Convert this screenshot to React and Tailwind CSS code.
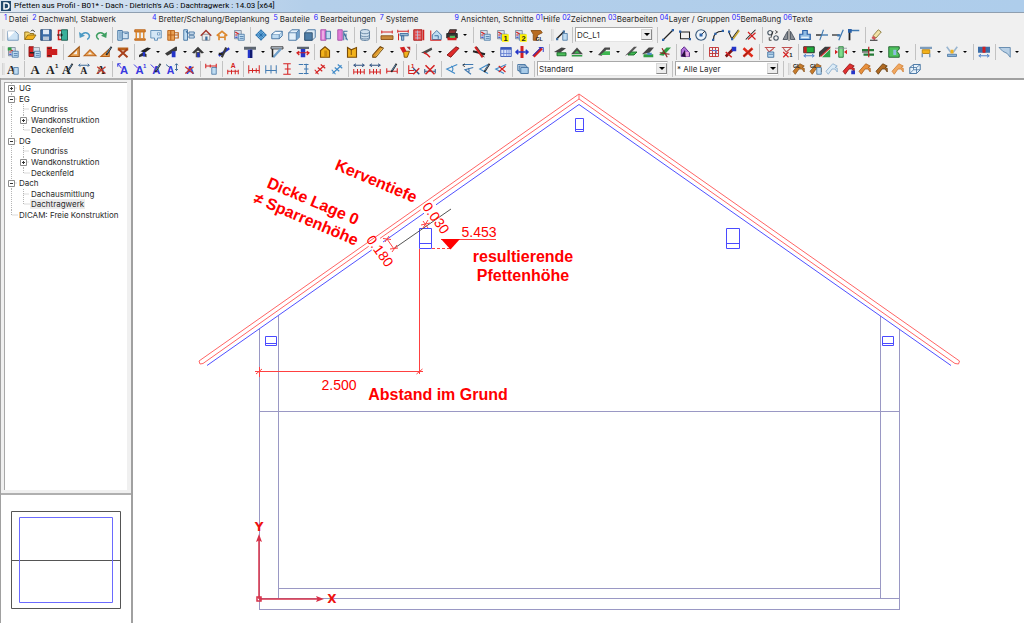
import React, { useState } from 'react';
import clsx from 'clsx';

const BL = '#3f6f9f', LB = '#bfdcf2', OR = '#dd8a30', BR = '#8a5218', RD = '#d42020', GN = '#2f9e44', NV = '#2435c8', BK = '#222222', GY = '#8a8f96', YL = '#f2b21c';
const SERIF = 'Liberation Serif, serif';

// path helpers: f = filled, s = stroked, b = both, t = letter
const f = (d, fill) => ({ d, fill, stroke: 'none' });
const s = (d, stroke, w = 1.5) => ({ d, fill: 'none', stroke, w });
const b = (d, fill, stroke, w = 1.2) => ({ d, fill, stroke, w });
const t = (ch, x, y, size, color, font) => ({ ch, x, y, size, color, font });

// --- SHARED PARTS ---
const doc = b('M9 6h6v9H9z', LB, BL, 1);
const cross = s('M3 5l11 9M14 5L3 14', '#c23a2e', 1.8);
const pen = [s('M14 1L7 12', BK, 2.4), s('M13 2L8 10', '#6fa8dc', 1)];
const houseSheet = [b('M2 2h9v11H2z', '#d5dfea', '#6f7f90', 1), s('M3 4l5 3M3 8h3', RD, 1.6), s('M3 11h3', NV, 1.4), b('M7 7h8v8H7z', LB, BL, 1), s('M9 10h5M9 12.5h5', BL, 1)];
const plank = (c, e) => [b('M0 11L9 1l6 3-3 2 3 1v5l-3-4-4 0-5 7z', c, e, 1)];

const ICONS = {
  file: [b('M1 3h10l4 4v8H1z', '#cfe4f5', '#6f94b8'), f('M1 3h10l-9 9z', '#ffffff')],
  open: [b('M1 14V4h5l2 2h5v3', '#f4d469', '#8c6a14'), b('M1 14l4-6h11l-4 6z', YL, '#8c6a14'), s('M9 3c2-2 4-2 5 1', BK, 1.3)],
  save: [b('M1 1h14v14H1z', '#3c6ea8', '#24466e'), f('M4 1h8v6H4z', '#dfeaf5'), f('M4 10h8v5H4z', '#b9c8d8')],
  exit: [f('M1 1h5v2H3v10h3v2H1z', RD), b('M6 1h8v14H6z', '#39b09a', '#1d5a4e'), s('M0 8h7M5 6l2 2-2 2', BK, 1.4)],
  undo: [s('M3 9c2-5 9-6 11 0 0 2-1 4-3 5', '#4d9ac4', 2), f('M0 4l1 8 7-3z', '#4d9ac4')],
  redo: [s('M13 9C11 4 4 3 2 9c0 2 1 4 3 5', '#3f9f62', 2), f('M16 4l-1 8-7-3z', '#3f9f62')],
  wall: [b('M1 2h6v13H1z', LB, BL), b('M7 4h8v9H7z', '#cfe2f2', BL), s('M4 3v10M10 6h4', BL, 1)],
  frame: [b('M1 1h14v3H1zM1 13h14v2H1z', OR, '#b9621a'), s('M3 4v9M8 4v9M13 4v9', OR, 2)],
  wallCut: [b('M1 2h14v10h-5v3H6v-3H1z', '#d4e7f6', '#5d8db8'), b('M10 5h3v3h-3z', '#fff', '#5d8db8', 1)],
  timber: [b('M1 2h9v13H1z', '#e9a257', '#b9621a'), s('M1 8h14M5 2v13M10 5h5v7h-5', '#b9621a', 1.5)],
  panel: [b('M1 1h5v14H1z', LB, BL), b('M8 4h7v3H8zM8 9h7v3H8z', '#e4f0fa', BL), s('M4 3l3 3', BL)],
  house: [b('M3 7h10v8H3z', '#ececec', GY), s('M1 9l7-7 7 7', '#a33a30', 2), f('M7 10h3v5H7z', BL)],
  roof: [s('M1 9l7-6 7 6M4 15V8M12 15V8M4 11h8', OR, 2.2)],
  houseDoc: houseSheet,
  globe: [b('M8 1l7 7-7 7-7-7z', '#6fb1e0', '#1f66a5'), s('M8 1v14M1 8h14M4 4l8 8M12 4l-8 8', '#1f66a5', 1)],
  cubeTop: [b('M1 13V7l5-4h9v6l-4 4z', LB, BL), s('M1 7h10l4-4M11 7v6', BL, 1), f('M2 7l4-3h8l-3 3z', '#f4faff')],
  cubeSide: [b('M1 5l4-4h10v10l-4 4H1z', '#e3f0fa', BL), f('M11 5l4-4v10l-4 4z', '#6fa0cb'), s('M1 5h10v10M11 5l4-4', BL, 1)],
  cubeFront: [b('M1 5l4-4h10v10l-4 4H1z', '#dbeaf6', BL), b('M1 5h10v10H1z', '#4f7ea8', '#31506c')],
  pink: [b('M1 1h7v14H1z', '#e27ad6', '#a650a8'), b('M8 3h6v10H8z', LB, BL), s('M4 2v12', '#fff', 1)],
  pink2: [b('M1 1h6v14H1z', '#e27ad6', '#a650a8'), s('M9 15V3h5M9 5l5 10M12 6v8', BL, 1.4)],
  disk: [b('M2 3c0-3 12-3 12 0v10c0 3-12 3-12 0z', '#cfe0ee', '#56789a'), s('M2 4c0 3 12 3 12 0M2 8c0 3 12 3 12 0M2 11c0 3 12 3 12 0', '#56789a', 1)],
  dimBeam: [s('M1 4h14M1 2v4M15 2v4', RD, 1.3), b('M0 9h16v5H0z', '#c98a3c', BR)],
  dimPost: [s('M1 3h14M1 1v4M15 1v4M2 6v9', RD, 1.3), b('M4 6h11v3H4zM6 9h3v6H6z', '#9db8d2', BL)],
  sheetRed: [b('M1 1h11v14H1z', '#e85050', '#a31616'), s('M3 4h7M3 8h7M3 12h7M6 2v12', '#b9c8e4', 1), s('M14 1v14', RD, 2)],
  dimHouse: [b('M3 8l6-6 6 6v6H3z', LB, BL), s('M1 2v13h14', RD, 1.4), s('M6 9h5v4', BL, 1.3)],
  printer: [b('M5 1h9l-2 5H3z', '#8c3030', BK), b('M1 6h14v6H1z', '#333', BK), f('M2 11h12v4H2z', RD), f('M5 9h7v3H5z', '#58b85c')],
  doc1: [...houseSheet, f('M8 7h9v10H8z', '#fff200'), t('1', 10, 16, 10, BK)],
  doc2: [...houseSheet, f('M8 7h9v10H8z', '#fff200'), t('2', 10, 16, 10, BK)],
  glBox: [b('M0 2h13l2 3-6 3-2 7H3V7z', '#b86c20', BR), t('GL', 6, 16, 7, BK)],
  lineDoc: [s('M1 13L11 3', BK, 1.8), f('M9 2h3v3H9zM0 12h3v3H0z', BL), doc],
  line: [s('M2 14L14 2', BK, 1.6), f('M0 13h3v3H0zM13 0h3v3h-3z', '#2c62a8')],
  rect: [s('M2 4h12v9H2z', BK, 1.4), f('M0 2h3v3H0zM13 12h3v3h-3z', '#2c62a8')],
  circle: [b('M8 1a7 7 0 1 0 .1 0z', '#eef5fb', '#3f5f80', 1.5), s('M8 8l5-5', BK, 1.2), f('M6 6h4v4H6z', '#2c62a8')],
  arc: [s('M2 14C2 7 6 3 14 3', BK, 1.5), f('M0 13h3v3H0zM13 1h3v3h-3zM3 5h3v3H3z', '#2c62a8')],
  polyPen: [s('M1 4l4 9L14 1', BK, 1.4), s('M15 2L7 13', '#c6a52e', 2), f('M0 2h3v3H0zM4 12h3v3H4z', '#2c62a8')],
  lineDel: [s('M1 14L14 1', BK, 1.4), s('M4 4l10 10M14 5L4 14', RD, 1.6)],
  gears: [s('M4 2a3 3 0 1 0 .1 0zM12 9a3 3 0 1 0 .1 0z', '#4d5b68', 1.6), s('M11 2l3 2-3 2M3 11v4h3M8 3L5 12', BK, 1.1)],
  mirror: [b('M6 3v11H0zM10 3v11h6z', '#8a8f96', '#4d5560'), s('M8 0v16', BK, 1)],
  stamp: [b('M5 2h6v5h4v7H1V7h4z', '#8fbbe2', '#2c62a8', 1.6), s('M3 11h10', '#fff', 1.4)],
  trim: [s('M0 8h8', BK, 1.8), s('M8 8h8', '#3f78b0', 1.8), s('M10 1L5 15', '#3f78b0', 1.4)],
  extend: [s('M0 8h10', BK, 1.6), s('M15 1L9 15', '#3f78b0', 1.6), f('M7 7h4v3H7z', '#3f78b0')],
  corner: [s('M2 15V3', BK, 2.4), s('M2 2h13', '#3f78b0', 2), f('M0 0h5v5H0z', '#2c62a8')],
  eraser: [b('M4 9l7-8 4 3-7 8z', '#f3e3a8', '#8a7a3c'), f('M4 9l4 3-2 3-4-3z', '#d05858'), s('M0 15h10', BK, 1.3)],

  houseGreen: [...houseSheet, f('M1 2h5v4H1z', GN)],
  docRed: [b('M0 1h6v13H0z', RD, '#8c1010'), b('M6 2h8v6H6z', '#d5dfea', GY, 1), b('M7 7h8v8H7z', LB, BL, 1), s('M9 10h5M9 12.5h5', BL, 1), s('M1 9h6', BK, 2)],
  sheetR2: [f('M1 1h7v14H1zM7 4h8v8H7z', '#cc1f1f'), s('M2 3h4M2 13h4', BK, 1.2)],
  ruler: [b('M1 14L15 1v13z', '#e8a050', '#9b5416', 1.4), f('M7 11l5-5v5z', '#f0f0f0')],
  rulerLow: [b('M0 13l8-8 8 8z', '#e8a050', '#b9621a', 1.4), f('M5 11l3-3 3 3z', '#f0f0f0')],
  rulerPen: [b('M0 14L11 4v10z', '#e8a050', '#b9621a', 1.4), ...pen],
  roofDel: [f('M1 2h14v4H1z', '#b9621a'), s('M2 4l12 11M14 4L2 15', '#a8401a', 2.6)],
  bBlack: [f('M2 7l9-5 5 1-8 6z', BK), f('M0 12l6-4 4 3v4l-4-2-6 2z', '#303030'), f('M5 8h3v6H5z', NV)],
  bAngle: [f('M0 10L14 1h2v5L3 13z', '#3c3c3c'), f('M9 7h5v8H9z', NV)],
  hBlack: [f('M0 9l8-8 8 8-3 1-5-4-5 4z', '#3a3a3a'), f('M5 8h6v7H5z', '#555'), f('M7 9h3v6H7z', NV)],
  bCross: [s('M1 13L15 3', NV, 3), s('M5 15l6-13', '#3c3c3c', 3), f('M1 9h5v3H1z', BK)],
  post: [f('M0 1h16v4H0z', '#5d6670'), f('M5 5h6v11H5z', NV), f('M8 5h3v11H8z', '#101a70')],
  corner2: [b('M0 1h16v3H0z', '#c0ccd8', BK, 1), s('M3 15L13 4', '#6fa0cb', 3), s('M2 4v11', BK, 2)],
  postRed: [f('M0 1h16v3H0z', '#5d6670'), f('M5 4h6v11H5z', NV), s('M0 9h16M3 7L0 9l3 3M13 7l3 2-3 3', RD, 1.6)],
  tag: [b('M2 15V6l6-5 6 5v9z', YL, '#7a4b08', 1.5), f('M7 6h4v9H7z', '#c98a10')],
  tag2: [b('M2 2l5 3 7-3v13H2z', YL, '#7a4b08', 1.5), s('M7 5v7', '#7a4b08', 1.2)],
  board: [b('M1 12L11 1l4 2L5 15H1z', '#e0992c', '#6e4208', 1.4), s('M5 14L14 3', '#f8dc70', 1)],
  boardRed: [b('M6 7h8l-3 8H7z', YL, '#7a4b08'), f('M1 2l6-1 3 6-5 2z', RD), f('M10 1h5v5z', '#a33')],
  cutRed: [f('M0 9L14 2l1 3-9 5z', '#4a4a4a'), s('M4 9l4 2 4 4', RD, 2)],
  barRed: [b('M0 12L12 1l4 2L5 15z', '#e02a2a', '#7c1010')],
  crossRed: [s('M0 7l16 4', BK, 3), s('M3 1l10 14', RD, 3), s('M5 1l10 14', BK, 1)],
  table: [b('M1 2h14v12H1z', '#d9e4fb', '#3a58b8'), f('M1 2h14v3H1z', '#3a58b8'), s('M5 5v9M9 5v9M12 5v9M1 10h14', '#5b78d0', 1)],
  plusRB: [f('M6 0h4v16H6z', RD), s('M0 8h16M3 5L0 8l3 3M13 5l3 3-3 3', NV, 2)],
  barRB: [s('M2 14L13 3', RD, 4), s('M1 13L12 2', NV, 1.4), s('M9 2h6v6', NV, 1.2)],
  gBeam: [f('M0 8l10-6 6 1-8 6z', '#444'), b('M4 9h12v4H4z', '#4cbf5a', '#176a28')],
  gRoof: [f('M0 11l8-9 8 9z', '#4a4a4a'), f('M1 12h14v2H1z', GN), f('M4 10l4-4 4 4z', '#3fb651')],
  gBar: [f('M0 12L9 2h7v3h-5L5 13z', '#4a4a4a'), f('M3 12l6-5h7v5z', '#3fb651')],
  gEdge: [f('M0 13L12 1h4l-9 9z', '#555'), b('M4 12l5-4h7l-4 4z', '#3fb651', '#176a28')],
  gBlue: [f('M0 11L9 2h7l-6 7z', '#444'), f('M2 11h13v4H2z', GN), f('M7 9h6v3H7z', '#4d8ac4')],
  gCross: [f('M0 12L10 2h6L6 13z', GN), s('M4 3l7 12M1 9l13 2', '#8c2020', 1.6)],
  purple: [b('M3 14V5l4-4 7 8v5z', '#b070d8', '#5a2488'), f('M8 8h5v6H8z', '#e9a8e4'), f('M3 13l5-8 1 10z', '#2a1040')],
  gridRed: [s('M2 2h12v12H2zM2 6h12M2 10h12M6 2v12M10 2v12', '#c03030', 1.2), s('M5 6h6v4', '#5b78d0', 1.4)],
  delBlue: [s('M1 14L12 3', '#7c1414', 3.5), f('M9 1h6v6H9z', NV), s('M1 8l8 7', RD, 2)],
  delRed: [s('M2 3l12 11M14 3L2 14', '#e02a1a', 3.4), s('M2 14L13 4', '#602010', 1)],
  pageV: [s('M1 2h14M3 3l4 5 6-5', '#c05050', 1.5), b('M5 8h8v7H5z', LB, BL), s('M6 11h6', BL, 1)],
  pageX: [s('M1 2h14M3 3l4 5 6-5', '#c05050', 1.5), s('M3 8l7 7M10 8l-7 7', RD, 1.5), t('1', 11, 15, 8, BK)],
  gArrow: [b('M1 1h14v8H1z', '#1fae3c', BK), f('M1 1h4v8H1z', '#c02020'), s('M2 13h12M4 11l-3 2 3 2M12 11l3 2-3 2', '#3f78c8', 1.2)],
  gDiag: [f('M0 15V8l8-7h8z', '#3c3c3c'), f('M4 15L15 4v11z', '#2fa048'), s('M2 14L15 2', '#c02020', 1.4)],
  gIn: [b('M5 1h6v14H5z', '#7fdc8c', '#257a36'), f('M0 5l4 3-4 3zM16 5l-4 3 4 3z', RD), s('M0 3h16', GY, 1)],
  gRows: [f('M0 4h16v3H0zM2 10h14v3H2z', '#257a36'), s('M9 1v14', '#c02020', 1.6), s('M0 8h9', BK, 1.2)],
  gPiece: [b('M1 1h14v3l-3 3 3 4v4H1z', '#4fc25e', '#1a5c28'), f('M7 5h4v7H7z', '#8fbbe2')],
  clampY: [f('M0 1h16v3H0z', '#7d9cbc'), b('M3 5h10v5H3z', YL, '#b88010'), s('M3 10v5M13 10v5', '#7d9cbc', 2)],
  downY: [s('M1 1l5 7h4l5-7', '#9ab6d0', 2.2), f('M6 5h4v5H6z', YL), b('M2 11h12v3H2z', '#8fb4d6', BL, 1)],
  blueRed: [f('M0 1h16v8H0z', '#3c6ea8'), f('M6 1h4v8H6z', RD), s('M2 13h12M4 11l-3 2 3 2M12 11l3 2-3 2', '#3f78c8', 1.2)],
  blueEdge: [b('M0 2h15v13l-4-5-6-3z', '#b8d0e6', '#5f87ad')],

  Adoc: [t('A', 0, 14, 16, BK, SERIF), doc],
  A: [t('A', 2, 14, 17, BK, SERIF)],
  A1: [t('A', 0, 14, 16, BK, SERIF), t('1', 12, 7, 8, BK)],
  Apen: [t('A', 0, 14, 16, BK, SERIF), ...pen],
  Adim: [t('A', 3, 15, 13, BK, SERIF), s('M1 3h14M3 1L1 3l2 2M13 1l2 2-2 2', '#2c5f90', 1.2)],
  Ax: [t('A', 2, 14, 16, BK, SERIF), cross],
  aB: [t('A', 4, 15, 15, '#3838e0'), s('M1 1l5 6M1 5V1h4', '#3838e0', 1.3)],
  aB1: [t('A', 2, 15, 15, '#3838e0'), s('M0 2l5 5', '#3838e0', 1.3), t('1', 12, 7, 8, '#3838e0')],
  aBpen: [t('A', 3, 15, 15, '#3838e0'), s('M1 2l5 5', '#3838e0', 1.3), ...pen],
  aBdim: [t('A', 1, 15, 14, '#3838e0'), s('M0 2l5 4M14 1v9M12 3l2-2 2 2M12 8l2 2 2-2', '#2c5f90', 1.2)],
  aBx: [t('A', 4, 15, 15, '#3838e0'), cross],
  dimDoc: [s('M1 1v6M15 1v6M1 4h14M7 2v4', RD, 1.4), doc],
  dimA: [t('A', 5, 7, 9, RD), s('M1 11h14M1 9v6M15 9v6M6 9v6M11 9v6', RD, 1.3)],
  dimR: [s('M1 3v11M15 3v11M1 10h14M6 7v6M11 7v6', RD, 1.3)],
  dimB: [s('M1 3v11M15 3v11M1 10h14M8 3v11', '#3f78b0', 1.3)],
  dimVR: [s('M3 1h10M3 15h10M9 1v14M5 8h8', RD, 1.4)],
  dimVB: [s('M1 2h6M1 14h6M11 1v14M8 2h6M8 8h6M8 14h6', '#3f78b0', 1.4)],
  dimDR: [s('M2 14L14 3M1 9l5 6M9 2l6 5M5 6l6 5', RD, 1.5)],
  dimDB: [s('M2 14L14 3M1 9l5 6M9 2l6 5M5 6l6 5', '#3f8ac8', 1.5)],
  dimIn: [s('M1 3h14M4 1L1 3l3 2M12 1l3 2-3 2', '#2c4f80', 1.3), s('M1 8v7M15 8v7M1 12h14M6 8v7M10 8v7', RD, 1.3)],
  dimPen: [s('M1 7v7M15 7v7M1 11h14', RD, 1.4), ...pen],
  dim1x: [s('M1 3v11h7M1 10h7', RD, 1.4), t('1', 4, 7, 8, RD), s('M7 7l8 8', '#2c4f80', 1.8), s('M15 7l-8 8', RD, 1.8)],
  dimX: [s('M1 8v6M15 8v6M1 11h14', '#2c4f80', 1.3), s('M2 3l12 12M14 3L2 15', RD, 2)],
  ang: [s('M15 2L1 8l11 6M7 4c3 2 3 6 0 8', '#3f8ac8', 1.5)],
  angDim: [s('M15 6L4 9l8 6M1 2h14M8 7c2 2 2 4 0 6', '#3f78b0', 1.5), s('M4 1L1 3l3 2', BK, 1)],
  angPen: [s('M12 2L1 8l11 6', '#3f8ac8', 1.5), ...pen],
  angX: [s('M15 2L1 8l11 6', '#3f8ac8', 1.5), s('M5 4l9 8M14 4l-9 8', RD, 1.5)],
  layers: [b('M1 2h10v8H1z', '#d5e6f4', BL), b('M3 4h10v8H3z', '#d5e6f4', BL), b('M5 6h10v8H5z', '#a8cbe8', BL)],
  gl1: [...plank('#c87c2c', BR), t('GL', 0, 6, 7, BK)],
  gl2: [...plank('#c87c2c', BR), t('GL', 0, 6, 7, BK), doc],
  pGhost: plank('#dcebf6', '#7fa6c8'),
  pRed: [...plank('#e03030', '#8c1010'), f('M11 10h5v5h-5z', NV)],
  pOrange: plank('#e8903c', '#a85c18'),
  pBrown: plank('#b06a22', '#5c3408'),
  pLight: plank('#f0a860', '#d07c30'),
  cube: [b('M1 6l5-4h9v7l-5 5H1z', '#e8f2fa', BL), s('M1 6h9v8M10 6l5-4M6 2v7h9M6 9l-5 5', BL, 1)],
};

const Glyph = ({ name }) => (
  <svg viewBox="0 0 16 16" className="size-3 shrink-0 overflow-visible" aria-hidden="true">
    {ICONS[name].map((p, i) => p.ch
      ? <text key={i} x={p.x} y={p.y} fontSize={p.size} fill={p.color} fontWeight="bold" fontFamily={p.font || 'Liberation Sans, sans-serif'}>{p.ch}</text>
      : <path key={i} d={p.d} fill={p.fill} stroke={p.stroke} strokeWidth={p.w} />)}
  </svg>
);

const Grip = () => <span className="h-3 w-[3px] shrink-0 border-l border-[#d4d4d4] bg-[#e2e2e2]" />;

// a trailing * marks a button with a drop-down arrow
const Tools = ({ icons, className, first, grip }) => (
  <div className={clsx('flex h-4 shrink-0 items-center pl-0.5 pr-[3px]', !first && 'border-l border-[#c2c2c2]', className)}>
    {grip && <Grip />}
    {icons.split(' ').map((n, i) => {
      const split = n.endsWith('*');
      const name = split ? n.slice(0, -1) : n;
      return (
        <div key={i} className={clsx('flex items-center', split ? 'flex-[26]' : 'flex-[16]')}>
          <button aria-label={name} className="flex h-4 min-w-0 flex-[16] items-center justify-center hover:bg-[#dbe9f7]"><Glyph name={name} /></button>
          {split && (
            <button aria-label={`${name} Auswahl`} className="flex h-4 flex-[10] items-center justify-center">
              <svg viewBox="0 0 4 2" className="h-0.5 w-1"><path d="M0 0h4L2 2z" fill="#000" /></svg>
            </button>
          )}
        </div>
      );
    })}
  </div>
);

const Combo = ({ label, options, className }) => (
  <div className={clsx('h-4 shrink-0 border-l border-[#c2c2c2] pl-0.5 pr-1', className)}>
    <label className="grid h-[15px] items-center border border-[#a8a8a8] border-b-[#e4e4e4] border-r-[#e4e4e4] bg-white">
      <select aria-label={label} className="col-start-1 row-start-1 h-[13px] w-full appearance-none bg-transparent pl-px pt-px leading-3 outline-none">
        {options.map(o => <option key={o}>{o}</option>)}
      </select>
      <span className="pointer-events-none col-start-1 row-start-1 flex h-[11px] w-[11px] items-center justify-center justify-self-end border border-[#d8d8d8] border-b-[#888] border-r-[#888] bg-[#ececec]">
        <svg viewBox="0 0 6 3" className="h-[3px] w-1.5"><path d="M0 0h6L3 3z" fill="#000" /></svg>
      </span>
    </label>
  </div>
);

const MENUS = [
  [['1', 'Datei'], ['2', 'Dachwahl, Stabwerk']],
  [['4', 'Bretter/Schalung/Beplankung'], ['5', 'Bauteile'], ['6', 'Bearbeitungen'], ['7', 'Systeme']],
  [['9', 'Ansichten, Schnitte'], ['01', 'Hilfe'], ['02', 'Zeichnen'], ['03', 'Bearbeiten'], ['04', 'Layer / Gruppen'], ['05', 'Bemaßung'], ['06', 'Texte']],
];

// guides: v = line through, p = plus, m = minus, t = tee, e = elbow
const TREE = [
  ['p', 'UG'], ['m', 'EG'], ['vt', 'Grundriss'], ['vp', 'Wandkonstruktion'], ['ve', 'Deckenfeld'],
  ['m', 'DG'], ['vt', 'Grundriss'], ['vp', 'Wandkonstruktion'], ['ve', 'Deckenfeld'],
  ['m', 'Dach'], ['vt', 'Dachausmittlung'], ['ve', 'Dachtragwerk'], ['e', 'DICAM: Freie Konstruktion'],
];

const Guide = ({ kind }) => (
  <svg viewBox="0 0 12 10" className="h-[10px] w-3 shrink-0 overflow-visible" aria-hidden="true">
    <path d={kind === 'e' ? 'M5.5 0v5h6' : kind === 'v' ? 'M5.5 0v11' : 'M5.5 0v11M5.5 5h6'} fill="none" stroke="#b5b5b5" strokeDasharray="1 1" />
    {(kind === 'p' || kind === 'm') && (
      <>
        <path d="M2.5 2.500h6v6h-6z" fill="#fff" stroke="#8c8c8c" />
        <path d={kind === 'p' ? 'M4 5.500h3M5.500 4v3' : 'M4 5.500h3'} stroke="#333" />
      </>
    )}
  </svg>
);

const Tree = () => {
  const [active, setActive] = useState(11);
  return (
    <ul className="grid h-[137px] auto-rows-fr">
      {TREE.map(([guides, label], i) => (
        <li key={i} className="flex items-center pl-px">
          {guides.split('').map((g, k) => <Guide key={k} kind={g} />)}
          <button onClick={() => setActive(i)} className={clsx('whitespace-nowrap px-px leading-[10px]', active === i && 'bg-[#ececec]')}>{label}</button>
        </li>
      ))}
    </ul>
  );
};

const Preview = () => (
  <svg viewBox="0 0 110 99" className="w-full" fill="none" aria-label="Übersicht">
    <path d="M.5 .5h109v97H.5zM0 49.500h110" stroke="#555" />
    <path d="M8.500 6.500h93v85h-93z" stroke="#6a6aff" />
  </svg>
);

const Note = ({ x, y, turn = 0, children }) => (
  <text x={x} y={y} transform={`rotate(${turn} ${x} ${y})`} textAnchor="middle" fontSize="16" fontWeight="bold" fontFamily="Liberation Sans, Arial, sans-serif" fill="#ff0000">{children}</text>
);

const Measure = ({ x, y, turn = 0, children }) => (
  <text x={x} y={y} transform={`rotate(${turn} ${x} ${y})`} textAnchor="middle" fontSize="14" fontFamily="Liberation Sans, Arial, sans-serif" fill="#ff0000">{children}</text>
);

const Section = () => (
  <svg viewBox="133 80 891 543" className="block h-full w-full" fill="none" aria-label="Dachschnitt">
    {/* walls and floors */}
    <path d="M259.500 329v281M278.500 316v283M880.500 316v283M899.500 329v281M259 411.500h641M278 588.500h603M259 598.500h641M259 609.500h641" stroke="#9a98c4" />

    {/* roof */}
    <g stroke="#ff6464">
      <path d="M199 361L579 94l380.500 267M203 363.500L368.700 246.300M380 238.400l40.700-28.600M433 201.200L579 99l376 264.500M199 361l1 3 3-.5M959.500 361l-1 3-3.500-.5M579 94v5" />
    </g>
    <path d="M207 365.500L371.700 250M383 242l41-28.800M436 204.800L579 104.500l372 261" stroke="#5050ff" />

    {/* purlins */}
    <g stroke="#4a4aff">
      <path d="M575.500 118.500h8v13h-8zM575.500 129.500h8" />
      <path d="M419.500 228.500h12v20h-12zM419.500 243.500h12" />
      <path d="M726.500 228.500h13v20h-13zM726.500 243.500h13" />
      <path d="M265.500 336.500h11v9h-11zM265.500 343.500h11M882.500 336.500h11v9h-11zM882.500 343.500h11" />
    </g>
    <path d="M394 248.500L451 209" stroke="#555" />

    {/* dimensions */}
    <g stroke="#ff4040">
      <path d="M255 371.500h168M259.500 367v10M419.500 249v125M256 374l6-5M416.500 374l6-5" />
      <path d="M387 239l7 10M383 238.500l8 1M389 236l-4 6M390 249l8-1M397 245l-5 7M421 225l9-2M428 220l-5 8M423 221l5 7" />
      <path d="M441 239.500h55" />
      <path d="M432 248.500h18" strokeDasharray="3 2" />
    </g>
    <path d="M441 239h19l-9.500 10.500z" fill="#ff0000" />
    <Measure x={479} y={237}>5.453</Measure>
    <Measure x={339} y={390}>2.500</Measure>
    <Measure x={432} y={221} turn={54}>0.030</Measure>
    <Measure x={376} y={254} turn={54}>0.180</Measure>

    <Note x={374} y={186} turn={23}>Kerventiefe</Note>
    <Note x={311} y={206} turn={23}>Dicke Lage 0</Note>
    <Note x={304} y={224} turn={23}>≠ Sparrenhöhe</Note>
    <Note x={523} y={262}>resultierende</Note>
    <Note x={523} y={281}>Pfettenhöhe</Note>
    <Note x={438} y={400}>Abstand im Grund</Note>

    {/* axes */}
    <path d="M259 599V538M259 599h60M257 597h4v4h-4z" stroke="#d83048" strokeWidth="1.500" />
    <path d="M259 534l3 8-3-1.500-3 1.500zM324 599l-8 3 1.500-3-1.500-3z" fill="#d83048" />
    <g fill="#ee1111" fontSize="12" fontWeight="bold" fontFamily="DejaVu Sans, sans-serif" textAnchor="middle">
      <text x="259" y="531">Y</text>
      <text x="332" y="603">X</text>
    </g>
  </svg>
);

const App = () => (
  <div className="flex h-screen flex-col overflow-hidden bg-[#f0f0f0] font-[Inter,sans-serif] text-[8px] text-[#2a2a2a]">
    <header className="flex h-[13px] shrink-0 items-center gap-[3px] border-b border-[#8f9fb0] bg-linear-to-r from-[#dfe8f2] via-[#b4cfea] via-30% to-[#aecdeb] pb-px pl-px">
      <svg viewBox="0 0 10 10" className="size-[10px]" aria-hidden="true">
        <path d="M0 0h10v10H0z" fill="#234a6c" />
        <path d="M3 2h2c4 0 4 6 0 6H3z" fill="none" stroke="#fff" strokeWidth="1.500" />
      </svg>
      <h1 className="font-[Roboto,sans-serif] leading-[11px] text-black">Pfetten aus Profil - B01* - Dach - Dietrich's AG : Dachtragwerk : 14.03 [x64]</h1>
    </header>

    <nav className="flex h-[13px] shrink-0 items-center gap-9 pb-0.5 pl-1">
      {MENUS.map((group, g) => (
        <div key={g} className={clsx('flex', g === 2 ? 'gap-0.5' : 'gap-1')}>
          {group.map(([key, label]) => (
            <button key={key} className="flex whitespace-nowrap leading-3">
              <span className={clsx('text-[7px] leading-[10px] text-[#2020ff]', key.length === 1 && 'pr-0.5')}>{key}</span>{label}
            </button>
          ))}
        </div>
      ))}
    </nav>

    <div className="flex h-[52px] shrink-0 flex-col gap-px pt-px">
      <div className="flex">
        <Tools first grip className="w-[74px]" icons="file open save exit" />
        <Tools className="w-[38px]" icons="undo redo" />
        <Tools className="w-[138px]" icons="wall frame wallCut timber panel house roof houseDoc" />
        <Tools className="w-[104px]" icons="globe cubeTop cubeSide cubeFront pink pink2" />
        <Tools className="w-[22px]" icons="disk" />
        <Tools className="w-[97px]" icons="dimBeam dimPost sheetRed dimHouse printer*" />
        <Tools className="w-[76px] pr-2" icons="houseDoc doc1 doc2 glBox" />
        <Tools first grip className="w-[23px]" icons="lineDoc" />
        <Combo className="w-[85px]" label="Linientyp" options={['DC_L1', 'DC_L2']} />
        <Tools className="w-[105px]" icons="line rect circle arc polyPen lineDel" />
        <Tools className="w-[103px]" icons="gears mirror stamp trim extend corner" />
        <Tools className="w-[22px]" icons="eraser" />
      </div>
      <div className="flex">
        <Tools first grip className="w-6" icons="houseGreen" />
        <Tools className="w-[39px]" icons="docRed sheetR2" />
        <Tools className="w-[71px]" icons="ruler rulerLow rulerPen roofDel" />
        <Tools className="w-[180px]" icons="bBlack* bAngle* hBlack* bCross* post* corner2* postRed" />
        <Tools className="w-[102px]" icons="tag* tag2* board* boardRed" />
        <Tools className="w-[133px]" icons="cutRed* barRed* crossRed* table plusRB barRB" />
        <Tools className="w-[127px] pr-2" icons="gBeam gRoof* gBar* gEdge gBlue gCross" />
        <Tools className="w-[27px] pl-0 pr-0" icons="purple*" />
        <Tools className="w-14" icons="gridRed delBlue delRed" />
        <Tools className="w-[39px]" icons="pageV pageX" />
        <Tools className="w-[117px]" icons="gArrow gDiag gIn* gRows* gPiece*" />
        <Tools className="w-[58px]" icons="clampY* downY*" />
        <Tools className="w-[22px]" icons="blueRed" />
        <Tools className="w-[29px]" icons="blueEdge*" />
      </div>
      <div className="flex">
        <Tools first grip className="w-6" icons="Adoc" />
        <Tools className="w-[88px]" icons="A A1 Apen Adim Ax" />
        <Tools className="w-[88px]" icons="aB aB1 aBpen aBdim aBx" />
        <Tools className="w-[22px]" icons="dimDoc" />
        <Tools className="w-[21px]" icons="dimA" />
        <Tools className="w-[105px]" icons="dimR dimB dimVR dimVB dimDR dimDB" />
        <Tools className="w-[55px]" icons="dimIn dimIn dimPen" />
        <Tools className="w-[38px]" icons="dim1x dimX" />
        <Tools className="w-[71px]" icons="ang angDim angPen angX" />
        <Tools className="w-[22px]" icons="layers" />
        <Combo className="w-[138px]" label="Darstellung" options={['Standard']} />
        <Combo className="w-[111px]" label="Layer" options={['* Alle Layer']} />
        <Tools grip className="w-[143px] pl-1" icons="gl1 gl2 pGhost pRed pOrange pBrown pLight cube" />
      </div>
    </div>

    <main className="flex min-h-0 flex-1">
      <aside className="flex w-[132px] shrink-0 flex-col border-x border-[#a0a0a0]">
        <div className="flex min-h-0 flex-1 flex-col border-b-2 border-t-2 border-[#b0b0b0] pb-[3px] pl-[3px] pr-1 pt-0.5">
          <div className="flex-1 overflow-hidden border-l border-t border-[#a8a8a8] bg-white">
            <Tree />
          </div>
        </div>
        <div className="bg-white px-[10px] pb-[13px] pt-4">
          <Preview />
        </div>
      </aside>
      <section className="min-w-0 flex-1 border-l border-t-2 border-[#a0a0a0] bg-white">
        <Section />
      </section>
    </main>
  </div>
);

export default App;
